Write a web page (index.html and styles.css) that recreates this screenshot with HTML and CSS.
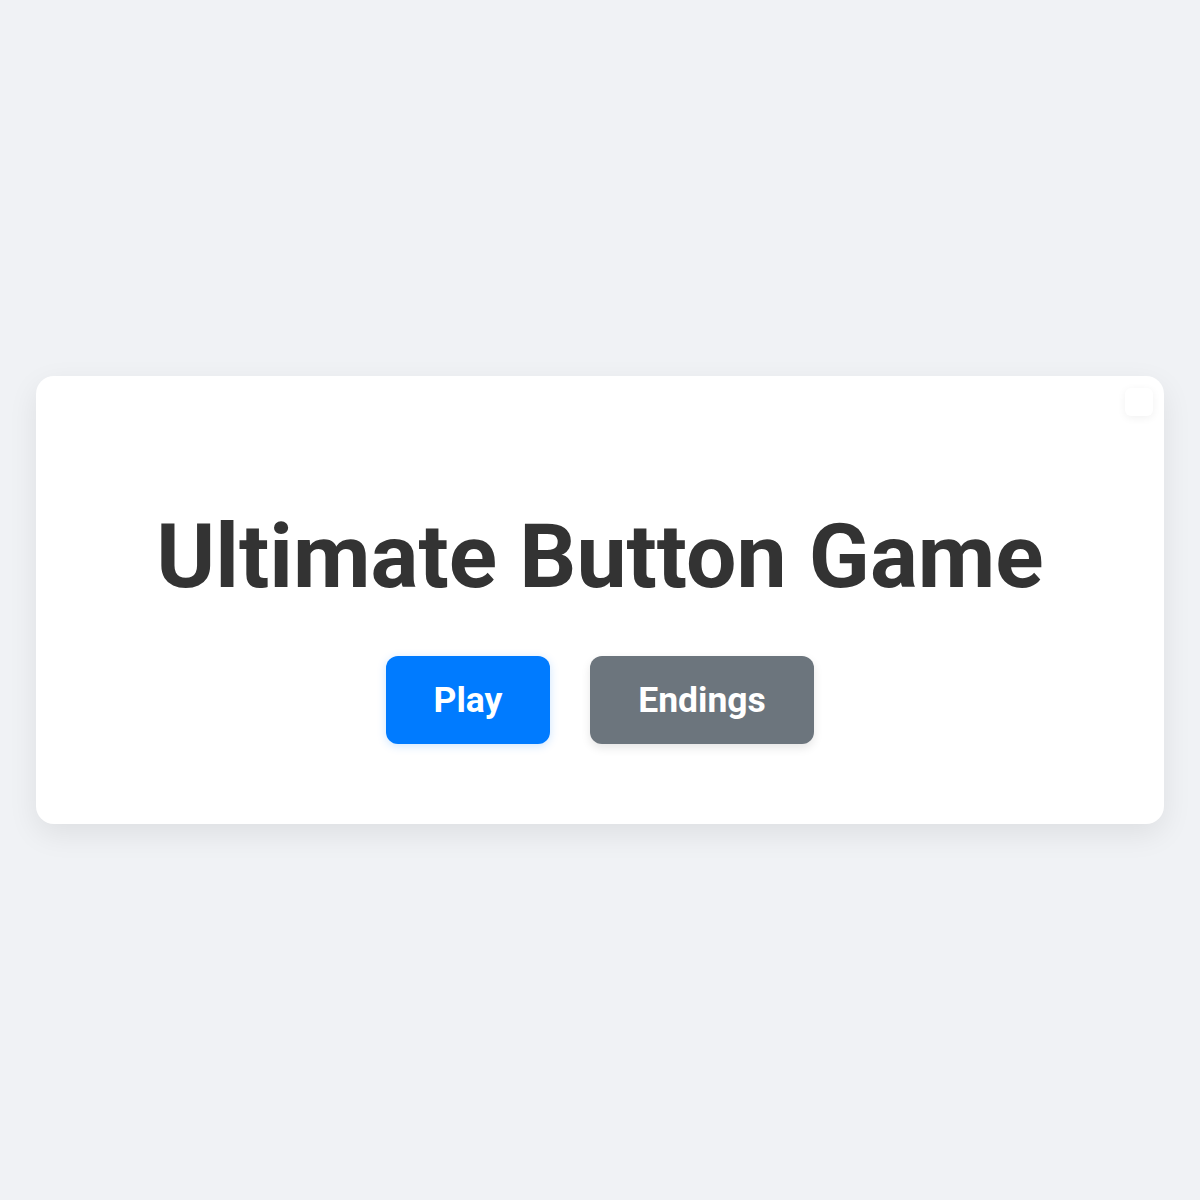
FILE: index.html
```html
<!DOCTYPE html>
<html lang="en">
<head>
<meta charset="utf-8">
<title>Ultimate Button Game</title>
<link rel="stylesheet" href="styles.css">
</head>
<body>
<main class="page">
  <section class="card">
    <button class="corner" aria-label="toggle"></button>
    <h1 class="title">Ultimate Button Game</h1>
    <div class="actions">
      <button class="btn btn-primary">Play</button>
      <button class="btn btn-secondary">Endings</button>
    </div>
  </section>
</main>
</body>
</html>
```
FILE: styles.css
```css
* { box-sizing: border-box; }
html, body { margin: 0; padding: 0; }
body {
  background: #f0f2f5;
  font-family: Roboto, "Liberation Sans", sans-serif;
  color: #333;
  height: 1200px;
}
.page {
  height: 1200px;
  padding: 0 36px;
  display: flex;
  align-items: center;
  justify-content: center;
}
.card {
  position: relative;
  width: 100%;
  height: 448px;
  background: #fff;
  border-radius: 18px;
  box-shadow: 0 10px 30px rgba(0, 0, 0, 0.08);
  display: flex;
  flex-direction: column;
  align-items: center;
  padding-top: 129px;
}
.corner {
  position: absolute;
  top: 12px;
  right: 11px;
  width: 28px;
  height: 28px;
  border: none;
  border-radius: 6px;
  background: #fff;
  box-shadow: 0 2px 8px rgba(0, 0, 0, 0.06);
}
.title {
  margin: 0 0 46px;
  font-size: 89.5px;
  font-weight: 700;
  line-height: 1.172;
  color: #333;
}
.actions {
  display: flex;
  gap: 40px;
}
.btn {
  font-family: Roboto, "Liberation Sans", sans-serif;
  font-size: 35.5px;
  font-weight: 700;
  color: #fff;
  border: none;
  border-radius: 12px;
  height: 88px;
  padding: 0;
}
.btn-primary {
  background: #007bff;
  width: 164px;
  box-shadow: 0 2px 10px rgba(0, 123, 255, 0.2);
}
.btn-secondary {
  background: #6c757d;
  width: 224px;
  box-shadow: 0 4px 10px rgba(0, 0, 0, 0.1);
}
```
